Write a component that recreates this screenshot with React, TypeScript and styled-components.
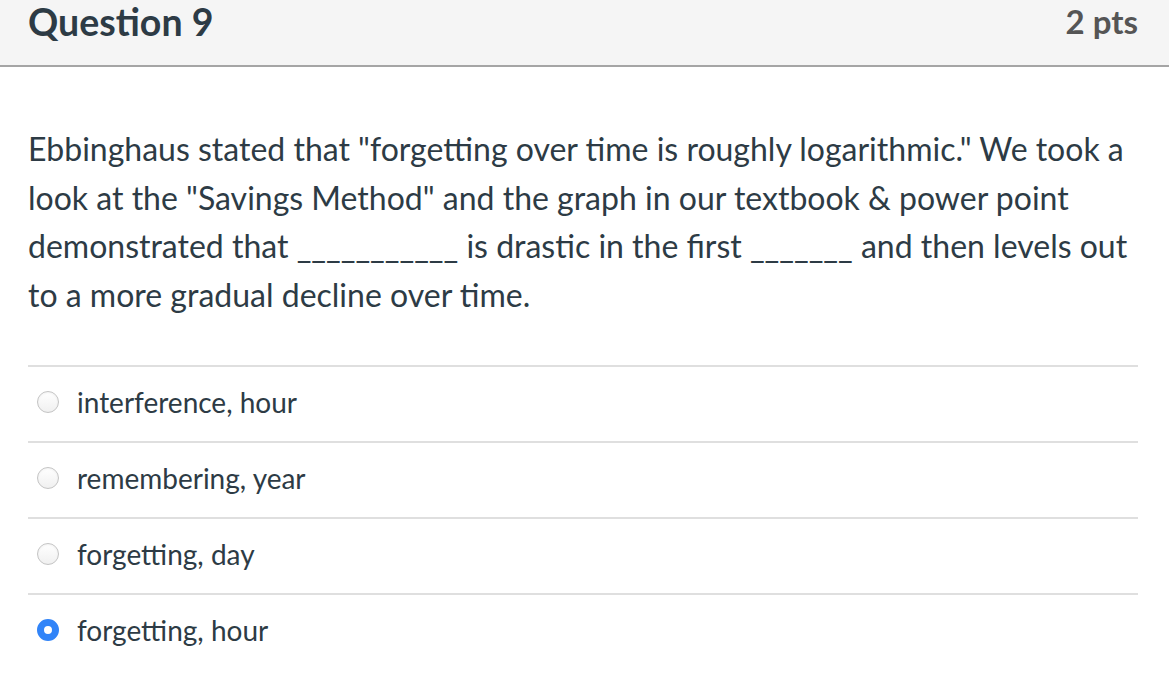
import React from "react";
import styled, { createGlobalStyle } from "styled-components";

const Global = createGlobalStyle`
  html, body { margin: 0; padding: 0; background: #fff; }
  body { font-family: Lato, "Noto Sans", sans-serif; color: #2d3b45; }
`;

const Page = styled.div`
  width: 1169px;
`;

const Header = styled.div`
  display: flex;
  justify-content: space-between;
  align-items: center;
  height: 67px;
  padding: 0 31px 0 28px;
  background: #f5f5f5;
  border-bottom: 2px solid #a5a5a5;
  box-sizing: border-box;
`;

const Title = styled.h2`
  margin: -22px 0 0;
  font-size: 37.5px;
  line-height: 45px;
  font-weight: 700;
  color: #2d3b45;
`;

const Points = styled.div`
  margin-top: -22px;
  font-size: 33px;
  line-height: 45px;
  font-weight: 700;
  color: #555;
`;

const Body = styled.div`
  padding: 58px 31px 0 28px;
`;

const Prompt = styled.p`
  margin: 0 0 46px;
  font-size: 32px;
  line-height: 48.5px;
  color: #2d3b45;
`;

const Answers = styled.div`
  display: flex;
  flex-direction: column;
`;

const Answer = styled.label`
  display: flex;
  align-items: center;
  gap: 18px;
  height: 76px;
  border-top: 2px solid #dfdfdf;
  box-sizing: border-box;
  padding: 0 0 4px 9px;
  font-size: 28px;
  color: #2d3b45;
`;

const Radio = styled.span<{ $checked?: boolean }>`
  width: 22px;
  height: 22px;
  border-radius: 50%;
  box-sizing: border-box;
  flex: none;
  ${(p) =>
    p.$checked
      ? `background: #fff; border: 7px solid #3184f8;`
      : `background: linear-gradient(#fff, #f0f0f0); border: 1px solid #c4c4c4; box-shadow: inset 0 1px 2px rgba(0,0,0,0.05);`}
`;

const answers = [
  { text: "interference, hour", checked: false },
  { text: "remembering, year", checked: false },
  { text: "forgetting, day", checked: false },
  { text: "forgetting, hour", checked: true },
];

export default function App() {
  return (
    <Page>
      <Global />
      <Header>
        <Title>Question 9</Title>
        <Points>2 pts</Points>
      </Header>
      <Body>
        <Prompt>
          Ebbinghaus stated that "forgetting over time is roughly logarithmic." We took a look at the "Savings Method" and the graph in our textbook &amp; power point demonstrated that ___________ is drastic in the first _______ and then levels out to a more gradual decline over time.
        </Prompt>
        <Answers>
          {answers.map((a) => (
            <Answer key={a.text}>
              <Radio $checked={a.checked} />
              {a.text}
            </Answer>
          ))}
        </Answers>
      </Body>
    </Page>
  );
}
